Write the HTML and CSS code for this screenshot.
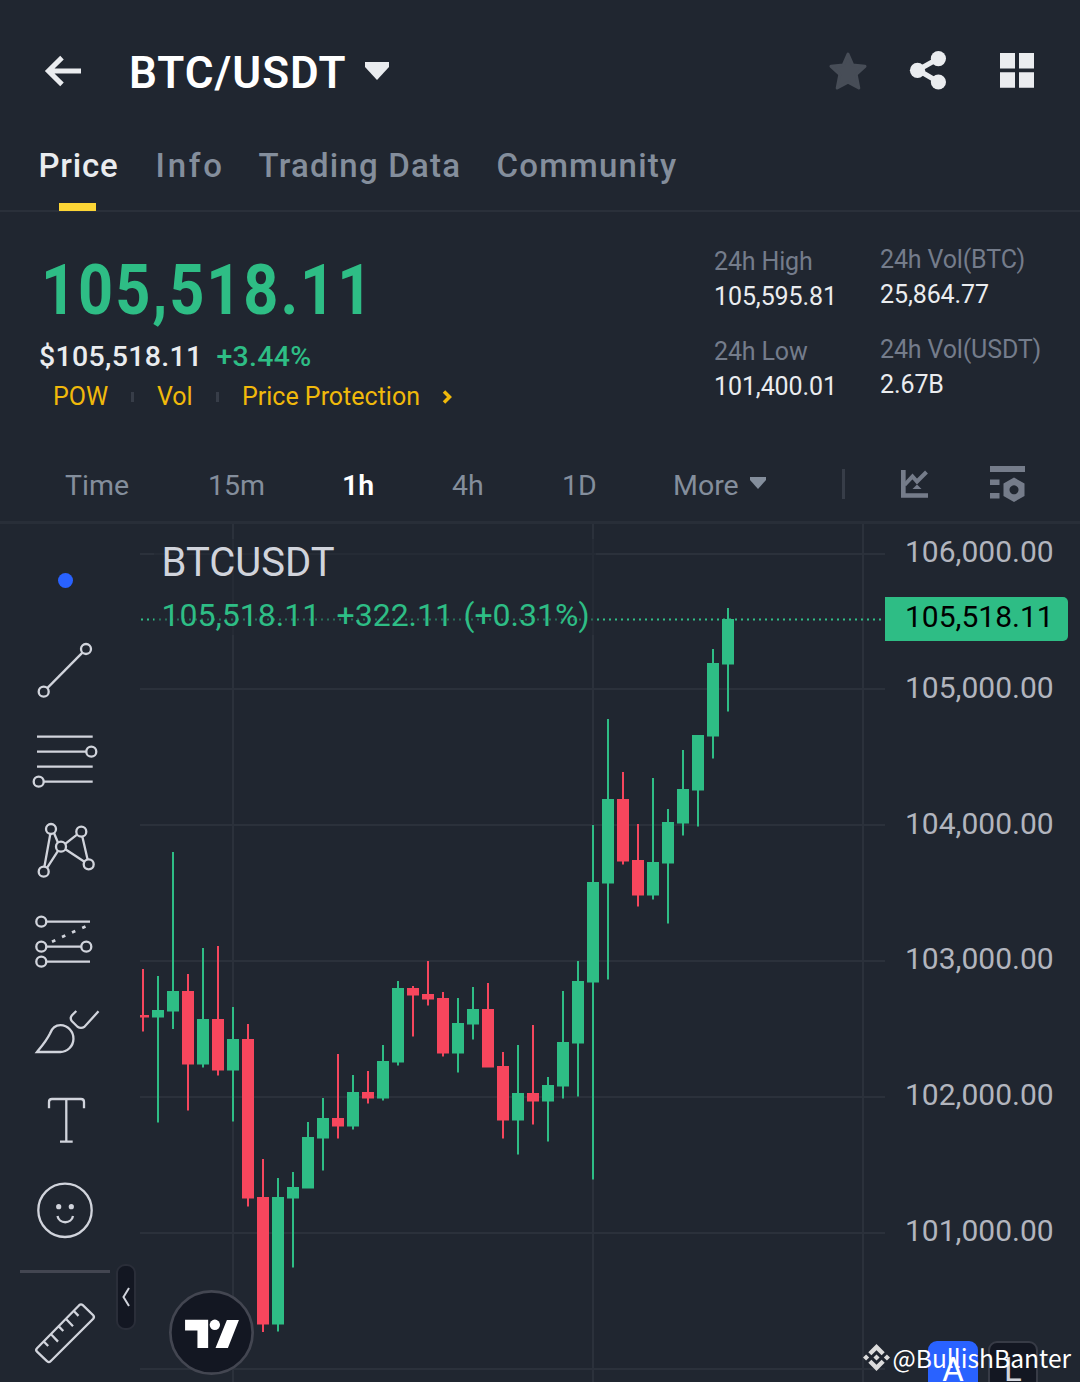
FILE: index.html
```html
<!DOCTYPE html>
<html lang="en">
<head>
<meta charset="utf-8">
<title>BTC/USDT</title>
<link rel="stylesheet" href="styles.css">
</head>
<body>
<div class="app">
  <header class="header">
    <svg class="back" viewBox="0 0 38 32" width="38" height="32"><path d="M37 16H5M18 2.6 4.4 16 18 29.4"/></svg>
    <h1 class="pair">BTC/USDT</h1>
    <svg class="pair-caret" viewBox="0 0 24 18" width="24" height="18"><path d="M0 0H24V5L12 18 0 5Z"/></svg>
    <div class="actions">
      <svg class="star" viewBox="0 0 38 40" width="38" height="40"><path d="M19 3 23.8 14 36 15.3 27.2 23.5 29.8 37 19 31.2 8.2 37 10.8 23.5 2 15.3 14.2 14Z"/></svg>
      <svg class="share" viewBox="0 0 38 40" width="38" height="40"><path d="M9 20 29.4 8.5M9 20 29.4 32"/><circle cx="8.5" cy="20.3" r="7.6"/><circle cx="29.4" cy="8.6" r="7.6"/><circle cx="29.4" cy="32" r="7.6"/></svg>
      <svg class="grid-icon" viewBox="0 0 34 35" width="34" height="35"><path d="M0 0h15v15.5H0zM19 0h15v15.5H19zM0 19.200h15v15.500H0zM19 19.200h15v15.500H19z"/></svg>
    </div>
  </header>

  <nav class="tabs">
    <span class="tab active">Price</span>
    <span class="tab info">Info</span>
    <span class="tab">Trading Data</span>
    <span class="tab">Community</span>
  </nav>

  <section class="summary">
    <div class="quote">
      <div class="last">105,518.11</div>
      <div class="fiat"><span class="usd">$105,518.11</span><span class="change">+3.44%</span></div>
      <div class="tags">
        <span class="tag-pow">POW</span><i></i><span class="tag-vol">Vol</span><i></i><span class="tag-pp">Price Protection</span>
        <svg viewBox="0 0 10 14" width="10" height="14"><path d="M2 1.500 7.500 7 2 12.500"/></svg>
      </div>
    </div>
    <dl class="stats">
      <div><dt>24h High</dt><dd>105,595.81</dd></div>
      <div><dt>24h Low</dt><dd>101,400.01</dd></div>
    </dl>
    <dl class="stats volume">
      <div><dt>24h Vol(BTC)</dt><dd>25,864.77</dd></div>
      <div><dt>24h Vol(USDT)</dt><dd>2.67B</dd></div>
    </dl>
  </section>

  <nav class="intervals">
    <span>Time</span><span>15m</span><span class="on">1h</span><span>4h</span><span>1D</span>
    <span class="more">More<svg viewBox="0 0 16 12" width="16" height="12"><path d="M0 0H16V3L8 12 0 3Z"/></svg></span>
    <i class="divider"></i>
    <svg class="chart-type" viewBox="0 0 27 28" width="27" height="28"><path class="ln" d="M2.300 0V25.500H27"/><path class="ln thin" d="M3.500 15 11.500 6.500 16 11.500 25.500 2"/><path d="M16 14.500 20.500 19H11.500Z"/></svg>
    <svg class="chart-settings" viewBox="0 0 35 36" width="35" height="36"><path d="M0 0H35V6H0zM0 13.500H9.500V19H0zM0 27H9.500V32.500H0z"/><path fill-rule="evenodd" d="M24 11.500 34.500 17.500V30L24 36 13.500 30V17.500ZM24 19.300a4.500 4.500 0 1 0 .01 0Z"/></svg>
  </nav>

  <section class="chart">
    <aside class="toolbar">
      <div class="tool"><b class="dot"></b></div>
      <svg class="tool" viewBox="0 0 90 90"><path d="M62.400 27.600 27.300 63.100"/><circle cx="66" cy="24" r="5"/><circle cx="23.700" cy="66.700" r="5"/></svg>
      <svg class="tool" viewBox="0 0 90 90"><path d="M17 21.700H72.700M17 36.700H66.300M17 51.700H72.700M23.700 66.700H72.700"/><circle cx="71.300" cy="36.700" r="5"/><circle cx="18.700" cy="66.700" r="5"/></svg>
      <svg class="tool" viewBox="0 0 90 90"><path d="M30.300 29 24.400 61.700M34 28 38 37.700M27 62.800 38 45.800M45.200 38.900 57 29.600M62.300 31.600 67.600 54.400M45.400 44.200 64.400 56.800"/><circle cx="31" cy="24" r="5"/><circle cx="61.300" cy="26.700" r="5"/><circle cx="41" cy="41.700" r="5"/><circle cx="23.700" cy="66.700" r="5"/><circle cx="68.700" cy="59.300" r="5"/></svg>
      <svg class="tool" viewBox="0 0 90 90"><path d="M26.300 26.700H70M26.300 51.700H61.300M26.300 66.700H70"/><path class="dots" d="M32 46.800 35.300 45.300M42 42.100 45.300 40.600M52 37.400 55.300 35.900M62.200 32.900 65.500 31.400"/><circle cx="21.300" cy="26.700" r="5"/><circle cx="21.300" cy="51.700" r="5"/><circle cx="66.300" cy="51.700" r="5"/><circle cx="21.300" cy="66.700" r="5"/></svg>
      <svg class="tool" viewBox="0 0 90 90"><path d="M17 67C24 58.500 27 55 30 48.500 32 43 35 40.200 40.500 40.200A13.200 13.400 0 0 1 40 67Z"/><path d="M56.300 26 52 30.300Q49.500 33.200 52 36.300L57.500 41.700Q61 44 64.500 41.700L78.500 26.300"/></svg>
      <svg class="tool" viewBox="0 0 90 90"><path d="M29 33.300V27Q29 24 32 24H61Q64 24 64 27V33.300M46.300 24V66.700M40 66.700H52.700"/></svg>
      <svg class="tool" viewBox="0 0 90 90"><circle cx="45" cy="45.300" r="26.700"/><path d="M37.500 51C39 59.300 51.500 59.300 53 51"/><g class="solid"><circle cx="38.700" cy="41.700" r="2.600"/><circle cx="51.300" cy="41.700" r="2.600"/></g></svg>
      <hr>
      <svg class="tool" viewBox="0 0 90 90"><path d="M59.200 17.200Q61 15.500 62.800 17.200L73.200 27.200Q74.700 28.900 73.200 30.700L30.600 73.300Q28.900 75 27.200 73.300L17 63.700Q15.300 61.900 17 60.200ZM24 53.700 28.200 58M31.300 46.500 38 53.600M39 38.600 43.300 43M46.300 31.300 53 38.300M54.300 23.500 58.500 27.900"/></svg>
    </aside>

    <svg class="plot" viewBox="140 524 745 858" width="745" height="858">
      <path class="gridline" d="M233 521V1382M593 521V1382M863 521V1382M140 554H885M140 689H885M140 825H885M140 961H885M140 1097H885M140 1233H885M140 1369H885"/>
      <path class="last-line" d="M141 619.500H885"/>
      <path class="up wick" d="M158 976V1122.500M173 852V1029M203 948V1067.500M233 1007V1121.500M278 1178V1331.500M293 1172V1267.500M308 1122V1188M323 1098V1170.500M353 1075V1129.500M383 1045V1100.500M398 981V1065.500M458 998V1072.500M473 987V1039.500M518 1045V1154.500M548 1077V1141.500M563 991V1098.500M578 961V1096.500M593 825V1179.500M608 719V979.500M653 778V899.500M668 809V923.500M683 750V835.500M698 735V826.500M713 649V758.500M728 608V711.500"/>
      <path class="down wick" d="M143 969V1031.500M188 974V1110.500M218 946V1075.500M248 1024V1206.500M263 1159V1332M338 1054V1138.500M368 1071V1103.500M413 986V1036.500M428 961V1005.500M443 992V1056.500M488 983V1067M503 1052V1138.500M533 1025V1124.500M623 772V864.500M638 824V906.500"/>
      <path class="up body" d="M158 1010V1017.500M173 991V1011.500M203 1019V1064.500M233 1039V1070.500M278 1197V1324.500M293 1187V1198.500M308 1137V1188.500M323 1118V1138.500M353 1092V1126.500M383 1061V1098.500M398 988V1062.500M458 1023V1053.500M473 1009V1024.500M518 1093V1120.500M548 1085V1101.500M563 1042V1086.500M578 981V1043.500M593 882V982.500M608 799V883.500M653 862V895.500M668 822V863.500M683 789V823.500M698 735V790.500M713 663V736.500M728 619V664.500"/>
      <path class="down body" d="M143 1015V1017.500M188 991V1064.500M218 1019V1070.500M248 1039V1198.500M263 1197V1324.500M338 1118V1126.500M368 1092V1098.500M413 988V995.500M428 994V999.500M443 998V1053.500M488 1009V1067.500M503 1066V1120.500M533 1093V1101.500M623 799V861.500M638 860V895.500"/>
    </svg>

    <div class="axis">
      <span>106,000.00</span><span>105,000.00</span><span>104,000.00</span><span>103,000.00</span><span>102,000.00</span><span>101,000.00</span>
      <div class="price-tag">105,518.11</div>
      <div class="scale-modes"><span class="auto">A</span><span class="log">L</span></div>
    </div>

    <div class="legend">
      <div class="symbol">BTCUSDT</div>
      <div class="values"><span>105,518.11</span><span>+322.11</span><span>(+0.31%)</span></div>
    </div>
    <div class="collapse"><svg viewBox="0 0 8 20" width="8" height="20"><path d="M7 1 1.500 10 7 19"/></svg></div>
    <svg class="tv-logo" viewBox="507 391 254 254" width="85" height="85"><circle cx="634" cy="518" r="123"/><path d="M555 480H624V564H592V512H555ZM680 481H716L683 564H646Z"/><circle class="logo-dot" cx="644" cy="495" r="15.500"/></svg>
    <div class="watermark"><svg viewBox="0 0 28 28" width="27" height="27"><path d="M14 0 22.500 8.500 19.300 11.700 14 6.400 8.700 11.700 5.500 8.500ZM14 28 22.500 19.500 19.300 16.300 14 21.600 8.700 16.300 5.500 19.500ZM14 10.800 17.200 14 14 17.200 10.800 14ZM3.200 10.800 6.400 14 3.200 17.200 0 14ZM24.800 10.800 28 14 24.800 17.200 21.600 14Z"/></svg><span>@BullishBanter</span></div>
  </section>
</div>
</body>
</html>
```
FILE: styles.css
```css
* { box-sizing: border-box; margin: 0; padding: 0; }
body { background: #202630; font-family: Roboto, "Liberation Sans", sans-serif; color: #eaecef; }
svg { display: block; flex: none; }
.app { width: 1080px; height: 1382px; overflow: hidden; white-space: nowrap; }

.header { display: flex; align-items: center; height: 144px; padding: 0 46px 0 44px; }
.back { fill: none; stroke: #eaecef; stroke-width: 5; margin-top: -2px; }
.pair { margin-left: 47px; width: 236px; padding-top: 1px; font-size: 44px; line-height: 60px; font-weight: 600; color: #fff; letter-spacing: 1px; }
.pair-caret { fill: #eaecef; margin-top: -3px; }
.actions { display: flex; align-items: center; margin-left: auto; margin-top: -3px; }
.star { fill: #474d57; stroke: #474d57; stroke-width: 3; stroke-linejoin: round; margin-right: 42px; }
.share { fill: #eaecef; margin: -1px 53px 0 0; }
.share path { stroke: #eaecef; stroke-width: 5; }
.grid-icon { fill: #eaecef; }

.tabs { display: grid; grid-template-columns: 117px 103px 238px auto; height: 68px; padding-left: 38.500px; border-bottom: 2px solid #2a303a; font-size: 33px; line-height: 43px; font-weight: 500; letter-spacing: 1.200px; color: #848e9c; }
.tab { position: relative; }
.tab.info { letter-spacing: 2.800px; }
.tab.active { color: #eaecef; letter-spacing: .8px; }
.tab.active::after { content: ""; position: absolute; left: 20.500px; bottom: -1px; width: 37px; height: 8px; background: #fcd535; }

.summary { display: flex; height: 229px; padding-left: 39px; }
.quote { width: 675px; padding-top: 38px; }
.last { font-size: 70px; line-height: 80px; font-weight: 700; color: #2ebd85; letter-spacing: 2.2px; transform: translateX(2px) scaleX(.875); transform-origin: 0 0; }
.fiat { display: flex; gap: 14px; margin-top: 9px; font-size: 28.500px; line-height: 36px; font-weight: 500; letter-spacing: .3px; }
.change { color: #2ebd85; }
.tags { display: flex; align-items: center; margin-top: 2px; padding-left: 14px; font-size: 25px; line-height: 40px; color: #f0b90b; }
.tags i { width: 3px; height: 10px; background: #373d48; }
.tag-pow { width: 78px; }
.tag-vol { width: 59px; margin-left: 23px; }
.tag-pp { width: 198px; margin-left: 23px; }
.tags svg { fill: none; stroke: #f0b90b; stroke-width: 3.500; margin-left: 2px; }
.stats { display: flex; flex-direction: column; gap: 20px; width: 166px; padding-top: 32px; font-size: 25px; line-height: 35px; letter-spacing: -.15px; }
.stats.volume { padding-top: 30px; }
.stats dt { color: #747c8b; }
.stats dd { font-weight: 450; color: #eaecef; letter-spacing: -.1px; }

.intervals { display: grid; grid-template-columns: 143px 134px 110px 110px 111px 169px 59px 89px auto; align-items: center; height: 80px; padding: 10px 0 0 65px; font-size: 28.500px; line-height: 60px; color: #848e9c; }
.intervals .on { color: #fff; font-weight: 600; }
.more { display: flex; align-items: center; gap: 11px; }
.more svg { fill: #848e9c; margin-top: -6px; }
.divider { width: 3px; height: 30px; background: #373d48; margin-top: -5px; }
.chart-type, .chart-settings { fill: #757c8a; margin-top: -5px; }
.chart-type .ln { fill: none; stroke: #757c8a; stroke-width: 4.700; }
.chart-type .thin { stroke-width: 4; }

.chart { position: relative; display: flex; height: 861px; border-top: 3px solid #282e38; }
.toolbar { width: 140px; padding: 11px 30px 0 20px; }
.tool { display: flex; align-items: center; justify-content: center; width: 90px; height: 90px; fill: none; stroke: #d1d4dc; stroke-width: 2.300; stroke-linecap: butt; }
.tool .solid { fill: #d1d4dc; stroke: none; }
.tool .dots { stroke-width: 2.800; }
.dot { width: 15px; height: 15px; border-radius: 50%; background: #2962ff; }
.toolbar hr { height: 3px; border: 0; margin: 15px 0; background: #434651; }
.plot .gridline { stroke: #2b313b; stroke-width: 2; fill: none; }
.last-line { stroke: #2ebd85; stroke-width: 2; stroke-dasharray: 2 4; }
.up { stroke: #2ebd85; }
.down { stroke: #f6465d; }
.wick { stroke-width: 2; }
.body { stroke-width: 12; }

.axis { position: relative; display: flex; flex-direction: column; width: 195px; padding-left: 20px; margin-top: -40px; font-size: 30px; color: #b2b5be; }
.axis > span { height: 135.800px; line-height: 136px; }
.price-tag { position: absolute; left: 0; top: 113px; width: 183px; height: 44px; padding-left: 20px; border-radius: 0 5px 5px 0; background: #2ebd85; color: #000; line-height: 40px; }
.scale-modes { position: absolute; left: 43px; top: 857px; display: flex; gap: 10px; height: 60px; font-size: 33px; line-height: 53px; text-align: center; color: #d1d4dc; }
.scale-modes span { width: 50px; border-radius: 9px; border: 2px solid #373b46; background: #131722; }
.scale-modes .auto { background: #2962ff; border-color: #2962ff; color: #fff; }

.legend { position: absolute; left: 154px; top: 15px; padding: 0 6px 0 7.500px; background: rgba(32, 38, 48, .5); }
.symbol { font-size: 40px; line-height: 48px; color: #d1d4dc; }
.values { display: flex; font-size: 32px; line-height: 40px; margin-top: 8px; color: #2ebd85; }
.values span:nth-child(1) { width: 175px; }
.values span:nth-child(2) { width: 127px; }
.collapse { position: absolute; left: 116px; top: 740px; width: 20px; height: 66px; display: flex; align-items: center; justify-content: center; border: 2px solid #2a2e39; border-radius: 9px; background: #131722; }
.collapse svg { fill: none; stroke: #d1d4dc; stroke-width: 2; }
.tv-logo { position: absolute; left: 169px; top: 766px; fill: #fff; }
.tv-logo circle { fill: #131722; stroke: #434651; stroke-width: 8; }
.tv-logo .logo-dot { fill: #fff; stroke: none; }
.watermark { position: absolute; left: 862.500px; top: 813px; display: flex; align-items: center; gap: 3px; font: 24.600px/40px "Noto Sans CJK SC", sans-serif; color: #fff; }
.watermark svg { fill: #dcdcdc; }
```
